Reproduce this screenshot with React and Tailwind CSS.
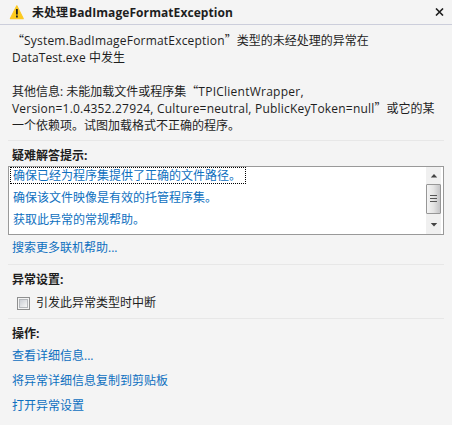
const tips = [
  '确保已经为程序集提供了正确的文件路径。',
  '确保该文件映像是有效的托管程序集。',
  '获取此异常的常规帮助。',
];

const actions = ['查看详细信息...', '将异常详细信息复制到剪贴板', '打开异常设置'];

function WarningIcon() {
  return (
    <svg className="h-[15px] w-[15px] shrink-0" viewBox="0 0 15 15">
      <path d="M7.8 0.8 14.2 13.6H1.4Z" fill="#fdcb1a" stroke="#fbc927" strokeWidth="1.2" strokeLinejoin="round" />
      <path d="M7 4h1.8v5.5H7zM7 10.6h1.8v2H7z" fill="#1e1e1e" />
    </svg>
  );
}

// Full-width quotes come from the CJK face, latin runs from Open Sans
function Cjk({ children }) {
  return <span className="font-['Noto_Sans_CJK_SC',sans-serif] leading-none">{children}</span>;
}

function Heading({ children }) {
  return <h2 className="h-4 pl-3 text-xs leading-4 font-bold">{children}</h2>;
}

function Divider() {
  return <div className="mr-2 ml-2 h-px bg-[#e7e7e7]" />;
}

function Link({ children }) {
  return <a href="#" className="block w-fit text-xs leading-4 text-[#0e70c0]">{children}</a>;
}

function Scrollbar() {
  return (
    <div className="mr-0.5 flex w-[15px] flex-col items-center bg-[#f0f0f0]">
      <svg className="h-[17px] w-[15px]" viewBox="0 0 15 17">
        <path d="M4.8 10.5 8 7 11.2 10.5Z" fill="#444" />
      </svg>
      <div className="flex h-[30px] w-[15px] flex-col items-center gap-0.5 rounded-[1px] border border-[#979797] bg-linear-to-r from-[#f4f4f4] via-[#e4e4e4] to-[#c4c4c6] pt-2.5">
        <div className="h-px w-[7px] bg-[#555]" />
        <div className="h-px w-[7px] bg-[#555]" />
        <div className="h-px w-[7px] bg-[#555]" />
      </div>
      <svg className="h-5 w-[15px]" viewBox="0 0 15 20">
        <path d="M4.8 9 8 12.5 11.2 9Z" fill="#444" />
      </svg>
    </div>
  );
}

export default function App() {
  return (
    <div className="h-[425px] w-[452px] overflow-hidden bg-[#f4f4f4] font-['Open_Sans','Noto_Sans_CJK_SC',sans-serif] text-xs text-[#1e1e1e]">
      {/* Title bar */}
      <header className="flex h-[25px] items-center border-b border-[#cccedb] pl-[9px]">
        <WarningIcon />
        <h1 className="ml-2 flex-1 pt-px leading-4 font-bold whitespace-nowrap">
          未处理<span className="ml-px tracking-[0.08px]">BadImageFormatException</span>
        </h1>
        <svg className="mr-2 h-2 w-[9px]" viewBox="0 0 9 8" fill="none" stroke="#1e1e1e" strokeWidth="1.6">
          <path d="M1 .5 8 7.5M8 .5 1 7.5" />
        </svg>
      </header>

      {/* Message */}
      <div className="h-[115px] pt-[7px] pl-3 leading-[17px] whitespace-nowrap *:h-[17px]">
        <p>
          <Cjk>“</Cjk>
          <span className="tracking-[0.2px]">System.BadImageFormatException</span>
          <Cjk>”类型的未经处理的异常在</Cjk>
        </p>
        <p><span className="tracking-[0.1px]">DataTest.exe </span>中发生</p>
        <p className="mt-[17px]">
          其他信息: 未能加载文件或程序集<Cjk>“</Cjk>
          <span className="tracking-[0.25px]">TPIClientWrapper,</span>
        </p>
        <p>
          <span className="tracking-[0.2px]">Version=1.0.4352.27924, Culture=neutral, PublicKeyToken=null</span>
          <Cjk>”或它的某</Cjk>
        </p>
        <p>一个依赖项。试图加载格式不正确的程序。</p>
      </div>
      <Divider />

      {/* Troubleshooting tips */}
      <section className="h-[123px] pt-[7px]">
        <Heading>疑难解答提示:</Heading>
        <div className="mt-0.5 ml-2 flex h-[69px] w-[436px] justify-between border border-[#999] bg-white">
          <ul>
            {tips.map((tip, i) => (
              <li key={tip} className="h-[22px] pl-px">
                <div className={i === 0 ? 'h-[17px] w-[236px] border border-dotted border-black pl-[2px] *:leading-[15px]' : 'pt-px pl-[3px]'}>
                  <Link>{tip}</Link>
                </div>
              </li>
            ))}
          </ul>
          <Scrollbar />
        </div>
        <div className="mt-[5px] ml-3">
          <Link>搜索更多联机帮助...</Link>
        </div>
      </section>
      <Divider />

      {/* Exception settings */}
      <section className="h-[53px] pt-[7px]">
        <Heading>异常设置:</Heading>
        <label className="mt-[7px] ml-[17px] flex items-center gap-1.5 leading-4">
          <span className="h-[13px] w-[13px] border border-[#8e8f8f] bg-[#f4f4f4] p-px">
            <span className="block h-[9px] w-[9px] border border-[#b5b8bc] bg-linear-to-br from-[#cbcfd5] to-[#f6f6f6]" />
          </span>
          引发此异常类型时中断
        </label>
      </section>
      <Divider />

      {/* Actions */}
      <section className="pt-[7px]">
        <Heading>操作:</Heading>
        <div className="mt-1.5 ml-3 flex flex-col gap-[9px]">
          {actions.map((action) => (
            <Link key={action}>{action}</Link>
          ))}
        </div>
      </section>
    </div>
  );
}
